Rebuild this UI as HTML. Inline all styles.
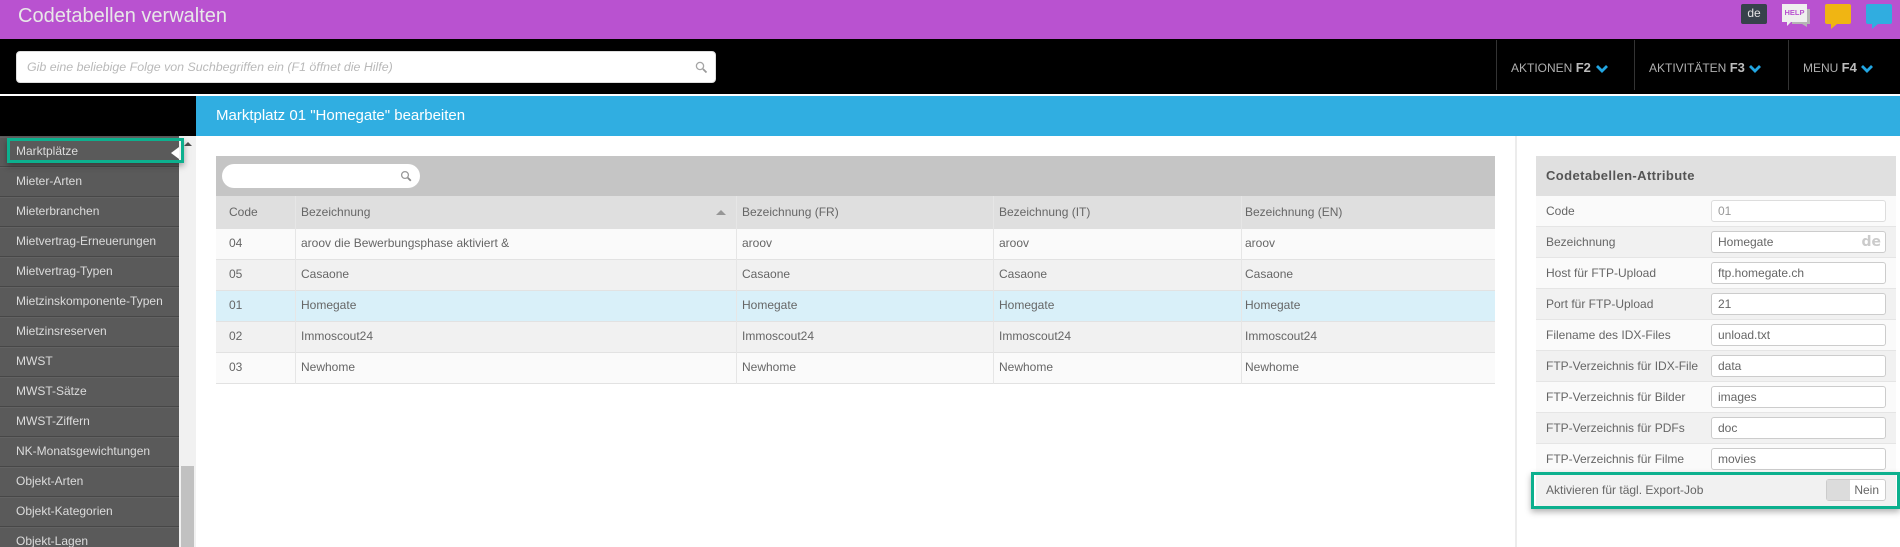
<!DOCTYPE html>
<html lang="de">
<head>
<meta charset="utf-8">
<title>Codetabellen verwalten</title>
<style>
html,body{margin:0;padding:0;width:1900px;height:547px;overflow:hidden;background:#fff;font-family:"Liberation Sans",Arial,sans-serif;}
div,span{box-sizing:border-box;}
.a{position:absolute;}
#page{position:relative;width:1900px;height:547px;overflow:hidden;}
.nav{position:absolute;top:40px;height:50px;line-height:55px;font-size:12px;color:#b0b0b0;white-space:nowrap;}
.nav b{font-size:13px;color:#bdbdbd;}
.div{position:absolute;top:40px;width:1px;height:50px;background:#333;}
.si{position:absolute;left:0;width:179px;height:30px;background:#5a5a5a;border-bottom:1px solid #474747;color:#dcdcdc;font-size:12px;line-height:29px;padding-left:16px;white-space:nowrap;box-shadow:inset 0 1px 0 #626262;}
.tr{position:absolute;left:216px;width:1279px;height:31px;border-bottom:1px solid #e2e2e2;font-size:12px;color:#666;line-height:29px;}
.tr span{position:absolute;top:0;white-space:nowrap;}
.c1{left:13px}.c2{left:85px}.c3{left:526px}.c4{left:783px}.c5{left:1029px}
.vl{position:absolute;top:196px;width:1px;height:188px;background:#e6e6e6;}
.ar{position:absolute;left:1536px;width:360px;height:31px;border-bottom:1px solid #e5e5e5;font-size:12px;color:#666;line-height:30px;padding-left:10px;white-space:nowrap;}
.in{position:absolute;left:175px;top:4px;width:175px;height:22px;background:#fff;border:1px solid #ccc;border-radius:3px;line-height:20px;padding-left:6px;color:#666;}
</style>
</head>
<body>
<div id="page">
  <!-- Purple header -->
  <div class="a" style="left:0;top:0;width:1900px;height:39px;background:#b952d0;"></div>
  <div class="a" style="left:18px;top:4px;font-size:20px;line-height:24px;color:#e8e8e8;white-space:nowrap;">Codetabellen verwalten</div>
  <div class="a" style="left:1741px;top:4px;width:26px;height:20px;background:#37424b;border-radius:2px;color:#e4e4e4;font-size:12px;line-height:19px;text-align:center;">de</div>
  <svg class="a" style="left:1780px;top:2px;" width="116" height="30" viewBox="0 0 116 30">
    <path d="M12 7h18v15h-3v3l-5-3h-10z" fill="#b5b5b5"/>
    <path d="M2 2h25v18H11l-4 4v-4H2z" fill="#efefef"/>
    <text x="4.500" y="13" font-family="Liberation Sans,sans-serif" font-size="7.500" font-weight="bold" fill="#b952d0">HELP</text>
    <path d="M47 2h22a2 2 0 0 1 2 2v16a2 2 0 0 1-2 2H57l-6 5v-5h-4a2 2 0 0 1-2-2V4a2 2 0 0 1 2-2z" fill="#f0b513"/>
    <path d="M88 2h22a2 2 0 0 1 2 2v16a2 2 0 0 1-2 2H98l-6 5v-5h-4a2 2 0 0 1-2-2V4a2 2 0 0 1 2-2z" fill="#30ade0"/>
  </svg>

  <!-- Black bar -->
  <div class="a" style="left:0;top:39px;width:1900px;height:55px;background:#000;"></div>
  <div class="a" style="left:0;top:94px;width:1900px;height:2px;background:#fff;"></div>
  <div class="a" style="left:16px;top:51px;width:700px;height:32px;background:#fff;border-radius:4px;border:1px solid #ddd;font-style:italic;font-size:12.400px;line-height:30px;color:#b9b9b9;padding-left:10px;white-space:nowrap;">Gib eine beliebige Folge von Suchbegriffen ein (F1 öffnet die Hilfe)</div>
  <svg class="a" style="left:695px;top:61px;" width="13" height="13" viewBox="0 0 13 13"><circle cx="5" cy="5" r="3.600" fill="none" stroke="#a5a5a5" stroke-width="1.300"/><path d="M8 8l3.500 3.500" stroke="#999" stroke-width="1.800"/></svg>
  <div class="div" style="left:1496px"></div>
  <div class="div" style="left:1634px"></div>
  <div class="div" style="left:1788px"></div>
  <div class="nav" style="left:1511px">AKTIONEN <b>F2</b></div>
  <div class="nav" style="left:1649px">AKTIVITÄTEN <b>F3</b></div>
  <div class="nav" style="left:1803px">MENU <b>F4</b></div>
  <svg class="a" style="left:1596px;top:64px" width="12" height="9" viewBox="0 0 12 9"><path d="M1 2l5 5 5-5" fill="none" stroke="#22a6e2" stroke-width="2.800"/></svg>
  <svg class="a" style="left:1749px;top:64px" width="12" height="9" viewBox="0 0 12 9"><path d="M1 2l5 5 5-5" fill="none" stroke="#22a6e2" stroke-width="2.800"/></svg>
  <svg class="a" style="left:1861px;top:64px" width="12" height="9" viewBox="0 0 12 9"><path d="M1 2l5 5 5-5" fill="none" stroke="#22a6e2" stroke-width="2.800"/></svg>

  <!-- Blue title -->
  <div class="a" style="left:0;top:96px;width:196px;height:40px;background:#000;"></div>
  <div class="a" style="left:196px;top:96px;width:1704px;height:40px;background:#30aee1;color:#fff;font-size:15px;line-height:40px;padding-left:20px;white-space:nowrap;">Marktplatz 01 "Homegate" bearbeiten</div>

  <!-- Sidebar -->
  <div class="a" style="left:0;top:136px;width:179px;height:411px;background:#5a5a5a;"></div>
  <div class="si" style="top:137px">Marktplätze</div>
  <div class="si" style="top:167px">Mieter-Arten</div>
  <div class="si" style="top:197px">Mieterbranchen</div>
  <div class="si" style="top:227px">Mietvertrag-Erneuerungen</div>
  <div class="si" style="top:257px">Mietvertrag-Typen</div>
  <div class="si" style="top:287px">Mietzinskomponente-Typen</div>
  <div class="si" style="top:317px">Mietzinsreserven</div>
  <div class="si" style="top:347px">MWST</div>
  <div class="si" style="top:377px">MWST-Sätze</div>
  <div class="si" style="top:407px">MWST-Ziffern</div>
  <div class="si" style="top:437px">NK-Monatsgewichtungen</div>
  <div class="si" style="top:467px">Objekt-Arten</div>
  <div class="si" style="top:497px">Objekt-Kategorien</div>
  <div class="si" style="top:527px">Objekt-Lagen</div>
  <div class="a" style="left:179px;top:136px;width:17px;height:411px;background:#f1f1f1;"></div>
  <div class="a" style="left:181px;top:466px;width:13px;height:81px;background:#c1c1c1;"></div>
  <div class="a" style="left:184px;top:142px;width:0;height:0;border-left:4px solid transparent;border-right:4px solid transparent;border-bottom:4px solid #505050;"></div>
  <div class="a" style="left:171px;top:147px;width:0;height:0;border-top:6px solid transparent;border-bottom:6px solid transparent;border-right:8px solid #fff;"></div>
  <div class="a" style="left:7px;top:138px;width:177px;height:25px;border:3px solid #0cb08e;box-shadow:0 3px 6px rgba(0,0,0,.35);"></div>

  <!-- Table -->
  <div class="a" style="left:216px;top:156px;width:1279px;height:40px;background:#c5c5c5;"></div>
  <div class="a" style="left:222px;top:164px;width:198px;height:24px;background:#fff;border-radius:12px;"></div>
  <svg class="a" style="left:400px;top:170px;" width="12" height="12" viewBox="0 0 12 12"><circle cx="5" cy="5" r="3.400" fill="none" stroke="#999" stroke-width="1.300"/><path d="M7.800 7.800l3 3" stroke="#888" stroke-width="1.800"/></svg>
  <div class="tr" style="top:196px;height:33px;background:#dfdfdf;border:0;line-height:32px;"><span class="c1">Code</span><span class="c2">Bezeichnung</span><span class="c3">Bezeichnung (FR)</span><span class="c4">Bezeichnung (IT)</span><span class="c5">Bezeichnung (EN)</span></div>
  <div class="a" style="left:716px;top:210px;width:0;height:0;border-left:5px solid transparent;border-right:5px solid transparent;border-bottom:5px solid #969696;"></div>
  <div class="tr" style="top:229px;background:#fafafa"><span class="c1">04</span><span class="c2">aroov die Bewerbungsphase aktiviert &amp;</span><span class="c3">aroov</span><span class="c4">aroov</span><span class="c5">aroov</span></div>
  <div class="tr" style="top:260px;background:#f1f1f1"><span class="c1">05</span><span class="c2">Casaone</span><span class="c3">Casaone</span><span class="c4">Casaone</span><span class="c5">Casaone</span></div>
  <div class="tr" style="top:291px;background:#d9f0f9"><span class="c1">01</span><span class="c2">Homegate</span><span class="c3">Homegate</span><span class="c4">Homegate</span><span class="c5">Homegate</span></div>
  <div class="tr" style="top:322px;background:#f1f1f1"><span class="c1">02</span><span class="c2">Immoscout24</span><span class="c3">Immoscout24</span><span class="c4">Immoscout24</span><span class="c5">Immoscout24</span></div>
  <div class="tr" style="top:353px;background:#fafafa"><span class="c1">03</span><span class="c2">Newhome</span><span class="c3">Newhome</span><span class="c4">Newhome</span><span class="c5">Newhome</span></div>
  <div class="vl" style="left:295px"></div>
  <div class="vl" style="left:736px"></div>
  <div class="vl" style="left:993px"></div>
  <div class="vl" style="left:1241px"></div>

  <!-- Right panel -->
  <div class="a" style="left:1515px;top:136px;width:2px;height:411px;background:#ececec;"></div>
  <div class="a" style="left:1536px;top:156px;width:360px;height:40px;background:#e0e0e0;color:#555;font-size:13px;letter-spacing:.4px;font-weight:bold;line-height:40px;padding-left:10px;white-space:nowrap;">Codetabellen-Attribute</div>
  <div class="ar" style="top:196px;background:#fafafa">Code<div class="in" style="color:#999;border-color:#ddd">01</div></div>
  <div class="ar" style="top:227px;background:#f1f1f1">Bezeichnung<div class="in">Homegate<span style="position:absolute;right:4px;top:0;font-family:'DejaVu Sans',sans-serif;font-weight:bold;font-size:14px;color:#cbcbcb;">de</span></div></div>
  <div class="ar" style="top:258px;background:#fafafa">Host für FTP-Upload<div class="in">ftp.homegate.ch</div></div>
  <div class="ar" style="top:289px;background:#f1f1f1">Port für FTP-Upload<div class="in">21</div></div>
  <div class="ar" style="top:320px;background:#fafafa">Filename des IDX-Files<div class="in">unload.txt</div></div>
  <div class="ar" style="top:351px;background:#f1f1f1">FTP-Verzeichnis für IDX-File<div class="in">data</div></div>
  <div class="ar" style="top:382px;background:#fafafa">FTP-Verzeichnis für Bilder<div class="in">images</div></div>
  <div class="ar" style="top:413px;background:#f1f1f1">FTP-Verzeichnis für PDFs<div class="in">doc</div></div>
  <div class="ar" style="top:444px;background:#fafafa;height:30px;border:0">FTP-Verzeichnis für Filme<div class="in">movies</div></div>
  <div class="ar" style="top:474px;background:#f1f1f1;height:33px;border:0;line-height:32px">Aktivieren für tägl. Export-Job
    <div class="a" style="left:290px;top:5px;width:60px;height:22px;background:#fff;border:1px solid #ccc;border-radius:3px;line-height:20px;text-align:right;padding-right:6px;color:#666;">Nein<div class="a" style="left:0;top:0;width:23px;height:20px;background:#dcdcdc;"></div></div>
  </div>
  <div class="a" style="left:1531px;top:472px;width:369px;height:37px;border:3px solid #0cb08e;box-shadow:0 3px 6px rgba(0,0,0,.3);"></div>
</div>
</body>
</html>
